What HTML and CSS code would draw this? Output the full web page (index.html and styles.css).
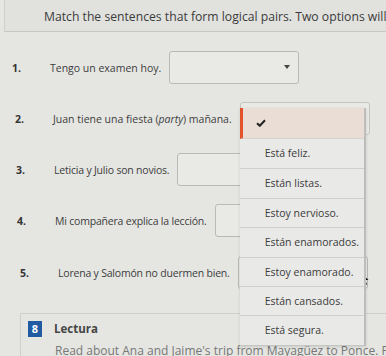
FILE: index.html
```html
<!DOCTYPE html>
<html lang="es">
<head>
<meta charset="utf-8">
<link rel="stylesheet" href="styles.css">
</head>
<body>
<div class="instructions">Match the sentences that form logical pairs. Two options will not be used.</div>
<div class="pairs">
  <div class="pair">
    <span class="num">1.</span>
    <span class="sentence">Tengo un examen hoy.</span>
    <span class="select"><span class="caret"></span></span>
  </div>
  <div class="pair">
    <span class="num">2.</span>
    <span class="sentence">Juan tiene una fiesta (<i>party</i>) mañana.</span>
    <span class="select open">
      <ul class="menu">
        <li class="opt selected"><svg class="check" width="10" height="8" viewBox="0 0 10 8"><path d="M1 4.2 L3.8 6.8 L9 1.2" fill="none" stroke="#222" stroke-width="2"/></svg></li>
        <li class="opt">Está feliz.</li>
        <li class="opt">Están listas.</li>
        <li class="opt">Estoy nervioso.</li>
        <li class="opt">Están enamorados.</li>
        <li class="opt">Estoy enamorado.</li>
        <li class="opt">Están cansados.</li>
        <li class="opt">Está segura.</li>
      </ul>
    </span>
  </div>
  <div class="pair">
    <span class="num">3.</span>
    <span class="sentence">Leticia y Julio son novios.</span>
    <span class="select"><span class="caret"></span></span>
  </div>
  <div class="pair">
    <span class="num">4.</span>
    <span class="sentence">Mi compañera explica la lección.</span>
    <span class="select"><span class="caret"></span></span>
  </div>
  <div class="pair">
    <span class="num">5.</span>
    <span class="sentence">Lorena y Salomón no duermen bien.</span>
    <span class="select"><span class="caret"></span></span>
  </div>
</div>
<section class="reading">
  <h2 class="reading-title"><span class="badge">8</span>Lectura</h2>
  <p class="reading-text">Read about Ana and Jaime's trip from Mayagüez to Ponce. Puerto Rico.</p>
</section>
<svg class="cursor" width="10" height="14" viewBox="0 0 10 14"><path d="M1 1 L1 11 L3.5 8.6 L5.5 13 L7 12.3 L5.1 8 L8.5 8 Z" fill="#111"/></svg>
</body>
</html>
```
FILE: styles.css
```css
html, body {
  margin: 0;
  padding: 0;
}
body {
  width: 386px;
  height: 356px;
  overflow: hidden;
  position: relative;
  background: #e5e6e2;
  font-family: "Open Sans", "Liberation Sans", sans-serif;
  font-size: 10.5px;
  color: #3b3b3b;
}
.instructions {
  margin-left: 4px;
  height: 31px;
  line-height: 34px;
  padding-left: 39px;
  font-size: 12.2px;
  background: #e1e2de;
  border-left: 1px solid #cfd0cc;
  border-bottom: 1px solid #c6c7c3;
  white-space: nowrap;
  overflow: hidden;
}
.pairs {
  padding-top: 10px;
  display: flex;
  flex-direction: column;
}
.pair {
  height: 51px;
  display: flex;
  align-items: center;
  gap: 8px;
  padding-left: 12px;
  white-space: nowrap;
}
.pair:nth-child(2) { padding-left: 15px; }
.pair:nth-child(3) { padding-left: 16px; }
.pair:nth-child(4) { padding-left: 17px; }
.pair:nth-child(5) { padding-left: 20px; }
.pair:nth-child(n+3) .sentence { letter-spacing: -0.2px; }
.pair:nth-child(5) { margin-top: 1px; }
.num {
  flex: none;
  width: 30px;
  font-weight: 700;
  color: #333;
  letter-spacing: 0;
}
.sentence {
  flex: none;
  color: #3d3d3d;
}
.select {
  position: relative;
  width: 128px;
  height: 31px;
  border: 1px solid #b9bab6;
  border-radius: 3px;
  background: #e9eae6;
  flex: none;
}
.caret {
  position: absolute;
  right: 8px;
  top: 13px;
  border-left: 3.5px solid transparent;
  border-right: 3.5px solid transparent;
  border-top: 4px solid #444;
}
.select.open {
  border-color: #c4c4c0;
  align-self: flex-start;
  margin-top: 9px;
}
.menu {
  position: absolute;
  top: 5px;
  left: -1px;
  width: 124px;
  margin: 0;
  padding: 0;
  list-style: none;
  background: #e9e9e7;
  border-right: 2px solid #bdbdbb;
  border-bottom: 1px solid #c4c4c2;
  box-shadow: 0 1px 3px rgba(0,0,0,0.12);
  z-index: 5;
}
.opt {
  height: 29.4px;
  line-height: 29px;
  padding-left: 25px;
  border-top: 1px solid #cfd0cd;
  box-sizing: border-box;
  color: #3b3b3b;
}
.opt:nth-child(2) {
  border-top: none;
}
.opt.selected {
  height: 31px;
  border-top: none;
  background: #e9ddd5;
  border-left: 3px solid #e2532b;
  padding-left: 13px;
  display: flex;
  align-items: center;
  border-bottom: 1px solid #d3d3d0;
}
.check {
  display: block;
}
.reading {
  margin: 15px 0 0 20px;
  border-top: 1px solid #cfd0cc;
  border-left: 1px solid #cfd0cc;
  padding: 6px 0 0 7px;
}
.reading-title {
  margin: 0;
  display: flex;
  align-items: center;
  gap: 12px;
  font-size: 11.5px;
  font-weight: 700;
  color: #454545;
  height: 17px;
}
.badge {
  width: 14px;
  height: 16px;
  background: #1f5aa3;
  color: #fff;
  font-size: 11px;
  font-weight: 700;
  display: flex;
  align-items: center;
  justify-content: center;
}
.reading-text {
  margin: 5px 0 0 27px;
  font-size: 12px;
  white-space: nowrap;
  color: #777;
}
.cursor {
  position: absolute;
  left: 360px;
  top: 272px;
}
```
